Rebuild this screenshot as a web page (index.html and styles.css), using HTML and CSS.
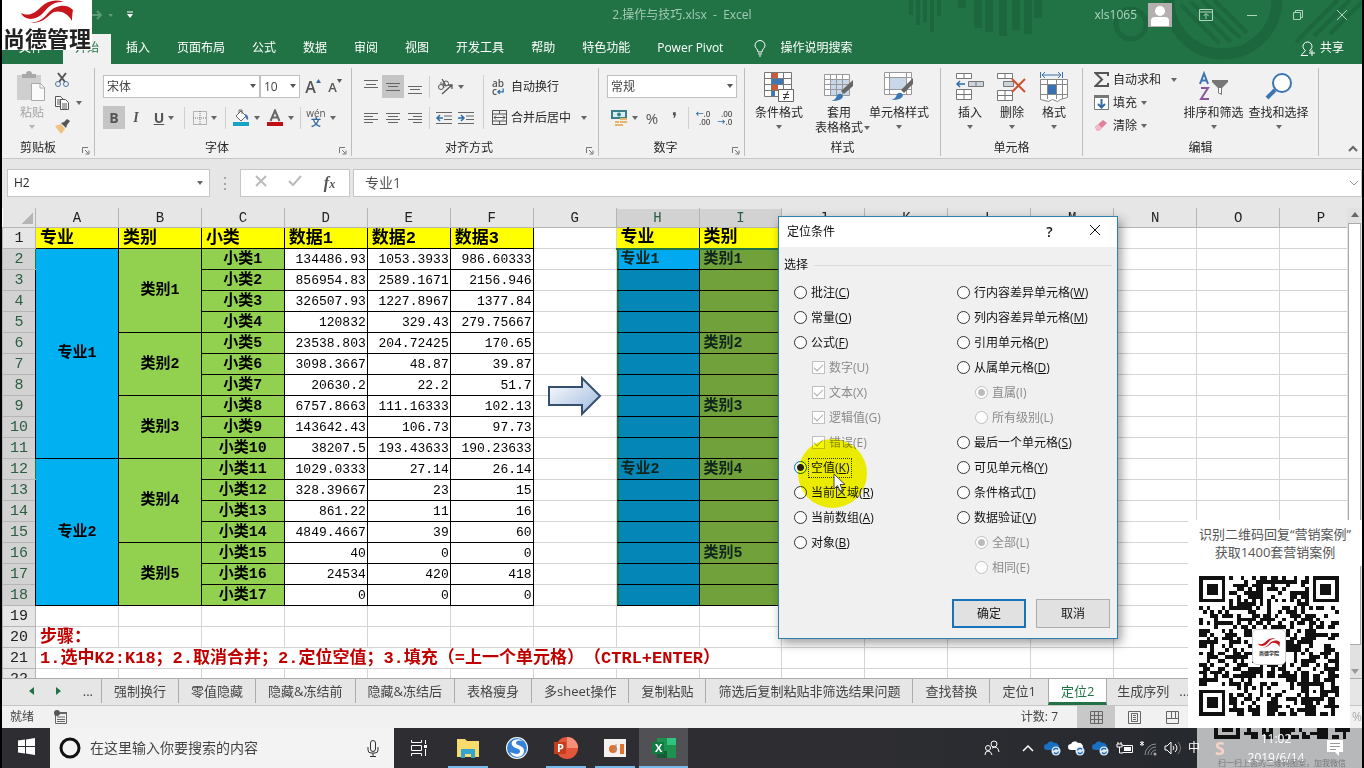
FILE: index.html
```html
<!DOCTYPE html>
<html lang="zh-CN">
<head>
    <meta charset="UTF-8">
    <meta name="viewport" content="width=device-width, initial-scale=1.0">
    <title>2.操作与技巧.xlsx - Excel</title>
    <link rel="stylesheet" href="styles.css">
</head>
<body>
    <svg class="defs" aria-hidden="true">
        <symbol id="cloud" viewBox="0 0 18 16">
            <path d="M3 10a3 3 0 0 1 0-6 4 4 0 0 1 7-1 4 4 0 0 1 5 4v3z" fill="currentColor"/>
            <circle cx="12" cy="11" r="4.500" fill="#dcecf8"/>
            <path d="M9.500 10.500a2.500 2.500 0 0 1 4.500-1M14.500 11.500a2.500 2.500 0 0 1-4.500 1" stroke="#1f66b0" stroke-width="1.300" fill="none"/>
        </symbol>
        <symbol id="swoosh" viewBox="0 0 52 26">
            <path d="M0 13C8 17 14 13 20 7C26 1 34-1 43 2C30 1 26 9 20 15C14 20 4 21 0 13z" fill="#c8161d"/>
            <path d="M4 21C16 25 22 19 28 12C34 5 46 3 52 10C51 15 51 18 51 21C47 13 39 10 33 12C26 15 22 27 4 21z" fill="#c8161d"/>
        </symbol>
        <symbol id="launcher" viewBox="0 0 8 8">
            <path d="M.5 6V.5H6M3 3l3.500 3.500M7 3.500V7H3.500" stroke="#777" fill="none"/>
        </symbol>
    </svg>

    <header class="title-area">
        <svg class="title-art" viewBox="0 0 464 64" aria-hidden="true">
            <g fill="none" stroke="#1c673d">
                <path d="M13 0v15M20 0v25M27 0v22M34 0v32M41 0v16" stroke-width="4"/>
                <path d="M64 0v8M80 0v28M91 0v32M105 0v36M118 0v30M130 0v34M140 0v18" stroke-width="8"/>
                <circle cx="233" cy="24" r="15" stroke-width="5"/>
                <circle cx="325" cy="0" r="54" stroke-width="11"/>
                <path d="M283 5l38 38M293 2l40 40M304 0l38 38M316 0l33 33" stroke-width="4"/>
                <path d="M440 0l-42 42M452 0l-36 36M464 2l-32 32" stroke-width="4"/>
            </g>
        </svg>
        <div class="title-bar">
            <div class="quick">
                <svg width="22" height="14" viewBox="0 0 22 14"><path d="M0 7h9M5 3l4 4-4 4" stroke="#5c9d78" stroke-width="2" fill="none"/><path d="M16 6h5l-2 3z" fill="#5c9d78"/></svg>
                <svg width="8" height="8" viewBox="0 0 8 8"><path d="M1 1h6" stroke="#fff"/><path d="M1 3h6L4 7z" fill="#fff"/></svg>
            </div>
            <h1>2.操作与技巧.xlsx&nbsp; -&nbsp; Excel</h1>
            <div class="window-tools">
                <span>xls1065</span>
                <svg class="avatar" width="24" height="24" viewBox="0 0 24 24"><path d="M0 0h24v24H0z" fill="#b5b0b0"/><circle cx="12" cy="8" r="5" fill="#fff"/><path d="M3 23v-5q0-4 4-4h10q4 0 4 4v5z" fill="#fff"/></svg>
                <button class="win" aria-label="功能区显示选项"><svg width="14" height="12" viewBox="0 0 14 12"><path d="M.5.5h13v11H.5zM.5 3h13M7 10V5M4.500 7L7 4.500 9.500 7"/></svg></button>
                <button class="win" aria-label="最小化"><svg width="12" height="12" viewBox="0 0 12 12"><path d="M1 6.500h10"/></svg></button>
                <button class="win" aria-label="还原"><svg width="12" height="12" viewBox="0 0 12 12"><path d="M1.500 3.500h7v7h-7zM3.500 3.500v-2h7v7h-2"/></svg></button>
                <button class="win" aria-label="关闭"><svg width="12" height="12" viewBox="0 0 12 12"><path d="M1 1l10 10M11 1L1 11"/></svg></button>
            </div>
        </div>
        <nav class="tabs">
            <a href="#" class="tab file">文件</a>
            <a href="#" class="tab active">开始</a>
            <a href="#" class="tab">插入</a>
            <a href="#" class="tab">页面布局</a>
            <a href="#" class="tab">公式</a>
            <a href="#" class="tab">数据</a>
            <a href="#" class="tab">审阅</a>
            <a href="#" class="tab">视图</a>
            <a href="#" class="tab">开发工具</a>
            <a href="#" class="tab">帮助</a>
            <a href="#" class="tab">特色功能</a>
            <a href="#" class="tab">Power Pivot</a>
            <a href="#" class="tab tell">
                <svg width="12" height="17" viewBox="0 0 12 17"><path d="M4 12C4 9 1 8 1 5.500a5 5 0 0 1 10 0C11 8 8 9 8 12zM4 14h4M5 16h2" stroke="#fff" fill="none"/></svg>
                操作说明搜索
            </a>
            <a href="#" class="tab share">
                <svg width="16" height="17" viewBox="0 0 16 17"><path d="M9.500 10.500a4.500 4.500 0 1 0-4 0L1 15.500h7M9.500 10.500l1.500 1M12 10v6M9 13h6" stroke="#fff" fill="none"/></svg>
                共享
            </a>
        </nav>
        <div class="brand">
            <svg width="52" height="26"><use href="#swoosh"/></svg>
            <strong>尚德管理</strong>
        </div>
    </header>

    <section class="ribbon">
        <div class="group clipboard">
            <div class="group-body">
                <button class="big muted">
                    <svg width="30" height="32" viewBox="0 0 30 32"><path d="M0 4h24v25H0z" fill="#d0cfcf"/><path d="M5 3h4a3 3 0 0 1 6 0h4v4H5z" fill="#a8a8a8"/><path d="M14.500 12.500h9l4 4v13h-13z" fill="#fafafa" stroke="#aaa"/><path d="M23 12v5h5" stroke="#aaa" fill="none"/></svg>
                    <span>粘贴</span><i class="caret"></i>
                </button>
                <div class="stack">
                    <button class="tool" aria-label="剪切"><svg width="16" height="16" viewBox="0 0 16 16"><path d="M4 1l7 9M12 1l-7 9" stroke="#555" stroke-width="2"/><circle cx="4" cy="12" r="2.500" fill="none" stroke="#4b77a8"/><circle cx="12" cy="12" r="2.500" fill="none" stroke="#4b77a8"/></svg></button>
                    <button class="tool" aria-label="复制"><svg width="16" height="16" viewBox="0 0 16 16"><path d="M1.500 1.500h5l3 3v7h-8zM3 5h4M3 7h4M3 9h4" fill="#fff" stroke="#555"/><path d="M6.500 4.500h5l3 3v7h-8zM8 9h5M8 11h5M8 13h5" fill="#fff" stroke="#555"/></svg><i class="caret"></i></button>
                    <button class="tool" aria-label="格式刷"><svg width="16" height="16" viewBox="0 0 16 16"><path d="M1 8l6-2 4 5-4 5z" fill="#efc280"/><path d="M7 5l5 5 1-3 3-4-3-2-3 3z" fill="#555"/></svg></button>
                </div>
            </div>
            <div class="group-name">剪贴板<svg><use href="#launcher"/></svg></div>
        </div>

        <div class="group font">
            <div class="group-body rows">
                <div class="line">
                    <span class="drop font-name"><select aria-label="字体"><option>宋体</option></select></span>
                    <span class="drop font-size"><select aria-label="字号"><option>10</option></select></span>
                    <button class="tool grow">A<svg width="5" height="4" viewBox="0 0 5 4"><path d="M0 4h5L2.500 0z" fill="#35699e"/></svg></button>
                    <button class="tool shrink">A<svg width="5" height="4" viewBox="0 0 5 4"><path d="M0 0h5L2.500 4z" fill="#555"/></svg></button>
                </div>
                <div class="line">
                    <button class="tool on bold">B</button>
                    <button class="tool italic">I</button>
                    <button class="tool wide under"><u>U</u><i class="caret"></i></button>
                    <hr>
                    <button class="tool wide" aria-label="边框"><svg width="14" height="14" viewBox="0 0 14 14"><path d="M.5.5h13v13H.5zM7 0v14M0 7h14" fill="none" stroke="#777" stroke-dasharray="1 1"/></svg><i class="caret"></i></button>
                    <hr>
                    <button class="tool wide" aria-label="填充颜色"><svg width="17" height="17" viewBox="0 0 17 17"><path d="M3 7l5-5 5 5-5 5zM6 4V1h3v4" fill="#fff" stroke="#666"/><path d="M12 5q4 1 3 6-3-1-3-6" fill="#3f79b5"/><path d="M0 13h16v4H0z" fill="#17a3c4"/></svg><i class="caret"></i></button>
                    <button class="tool wide" aria-label="字体颜色"><svg width="17" height="17" viewBox="0 0 17 17"><path d="M3.500 12L8 1.500 12.500 12M5 8.500h6" fill="none" stroke="#666" stroke-width="2"/><path d="M0 13h16v4H0z" fill="#c00d18"/></svg><i class="caret"></i></button>
                    <hr>
                    <button class="tool wide" aria-label="拼音"><span class="pinyin">wén<b>文</b></span><i class="caret"></i></button>
                </div>
            </div>
            <div class="group-name">字体<svg><use href="#launcher"/></svg></div>
        </div>

        <div class="group align">
            <div class="group-body">
                <div class="rows">
                    <div class="line">
                        <button class="tool" aria-label="顶端对齐"><svg width="14" height="14" viewBox="0 0 14 14"><path d="M0 .5h14M2 4.500h10M0 7.500h14" stroke="#666"/></svg></button>
                        <button class="tool on" aria-label="垂直居中"><svg width="14" height="14" viewBox="0 0 14 14"><path d="M0 3.500h14M2 6.500h10M0 10.500h14" stroke="#666"/></svg></button>
                        <button class="tool" aria-label="底端对齐"><svg width="14" height="14" viewBox="0 0 14 14"><path d="M0 6.500h14M2 9.500h10M0 13.500h14" stroke="#666"/></svg></button>
                        <hr>
                        <button class="tool wide" aria-label="方向"><svg width="17" height="16" viewBox="0 0 17 16"><g fill="none" stroke="#555"><circle cx="4" cy="8" r="2.500"/><path d="M3 4q3-1 4 5"/><circle cx="9" cy="4.500" r="2.500"/><path d="M5 0l4 7M5 15L15 6M11 6h4v4" stroke-width="1.300"/></g></svg><i class="caret"></i></button>
                    </div>
                    <div class="line">
                        <button class="tool" aria-label="左对齐"><svg width="14" height="12" viewBox="0 0 14 12"><path d="M0 1.500h14M0 4.500h9M0 7.500h14M0 10.500h9" stroke="#666"/></svg></button>
                        <button class="tool" aria-label="居中"><svg width="14" height="12" viewBox="0 0 14 12"><path d="M0 1.500h14M2 4.500h10M0 7.500h14M2 10.500h10" stroke="#666"/></svg></button>
                        <button class="tool" aria-label="右对齐"><svg width="14" height="12" viewBox="0 0 14 12"><path d="M0 1.500h14M5 4.500h9M0 7.500h14M5 10.500h9" stroke="#666"/></svg></button>
                        <hr>
                        <button class="tool" aria-label="减少缩进量"><svg width="16" height="12" viewBox="0 0 16 12"><path d="M0 .5h16M8 4h8M8 7.500h8M0 11.500h16" stroke="#666"/><path d="M1 6h6M4 3L1 6l3 3" stroke="#2f6ca8" stroke-width="1.500" fill="none"/></svg></button>
                        <button class="tool" aria-label="增加缩进量"><svg width="16" height="12" viewBox="0 0 16 12"><path d="M0 .5h16M8 4h8M8 7.500h8M0 11.500h16" stroke="#666"/><path d="M0 6h6M3 3l3 3-3 3" stroke="#2f6ca8" stroke-width="1.500" fill="none"/></svg></button>
                    </div>
                </div>
                <hr class="tall">
                <div class="rows">
                    <button class="text-tool"><span class="abc">ab<br>c<em>↵</em></span>自动换行</button>
                    <button class="text-tool"><svg width="15" height="15" viewBox="0 0 15 15"><path d="M.5.5h14v14H.5zM.5 4h14M.5 11h14M7.500 0v4M7.500 11v4" fill="none" stroke="#555"/><path d="M2 7.500h11M4 5.500l-2 2 2 2M11 5.500l2 2-2 2" stroke="#555" fill="none"/></svg>合并后居中<i class="caret far"></i></button>
                </div>
            </div>
            <div class="group-name">对齐方式<svg><use href="#launcher"/></svg></div>
        </div>

        <div class="group number">
            <div class="group-body rows">
                <div class="line">
                    <span class="drop number-format"><select aria-label="数字格式"><option>常规</option></select></span>
                </div>
                <div class="line">
                    <button class="tool wide" aria-label="会计数字格式"><svg width="17" height="16" viewBox="0 0 17 16"><path d="M0 0h16v9H0z" fill="#3a8088"/><path d="M2 2h12v5H2z" fill="#d7eeee"/><circle cx="8" cy="4.500" r="2" fill="#3a8088"/><path d="M9 8h7v2H9zM9 11h7v2H9zM4 11h4v2H4zM4 14h8v2H4z" fill="#e8b56b"/></svg><i class="caret"></i></button>
                    <button class="tool percent">%</button>
                    <button class="tool comma">❜</button>
                    <hr>
                    <button class="tool decimals"><span><em>←</em>.0<br>.00</span></button>
                    <button class="tool decimals"><span>.00<br><em>→</em>.0</span></button>
                </div>
            </div>
            <div class="group-name">数字<svg><use href="#launcher"/></svg></div>
        </div>

        <div class="group styles">
            <div class="group-body">
                <button class="big">
                    <svg width="30" height="30" viewBox="0 0 30 30"><path d="M.5.5h27v24H.5z" fill="#fff"/><path d="M8 0h6v6H8zM8 12h6v6H8z" fill="#cf5a3a"/><path d="M8 6h11v6H8zM8 18h3v6H8z" fill="#3e77b6"/><path d="M.5.5h27v24H.5zM.5 6.500h27M.5 12.500h27M.5 18.500h27M7.500 0v24M19.500 0v24" fill="none" stroke="#777"/><path d="M14.500 17.500h15v12h-15z" fill="#fff" stroke="#666"/><path d="M19 22.500h6M19 25.500h6M24 19l-4 9" stroke="#333"/></svg>
                    <span>条件格式</span><i class="caret"></i>
                </button>
                <button class="big">
                    <svg width="30" height="30" viewBox="0 0 30 30"><path d="M.5 2.500h25v21H.5z" fill="#fff"/><path d="M7 8h19v15H7z" fill="#c9d8e8"/><path d="M.5 2.500h25v21H.5zM.5 7.500h25M.5 12.500h25M.5 17.500h25M6.500 2v21M12.500 2v21M18.500 2v21" fill="none" stroke="#999"/><path d="M29 8v6l-9 8-3-3z" fill="#666"/><path d="M7 29q5-1 6-6 4-3 6 1 0 5-12 5" fill="#3c77b5"/></svg>
                    <span>套用<br>表格格式</span><i class="caret side"></i>
                </button>
                <button class="big">
                    <svg width="30" height="30" viewBox="0 0 30 30"><path d="M.5.5h27v22H.5z" fill="#fff"/><path d="M6 6h16v11H6z" fill="#c9d8e8"/><path d="M.5.5h27v22H.5zM.5 5.500h27M.5 17.500h27M5.500 0v22M22.500 0v22" fill="none" stroke="#999"/><path d="M29 6v6l-9 9-3-3z" fill="#666"/><path d="M7 28q5-1 6-6 4-3 6 1 0 5-12 5" fill="#3c77b5"/></svg>
                    <span>单元格样式</span><i class="caret"></i>
                </button>
            </div>
            <div class="group-name">样式</div>
        </div>

        <div class="group cells">
            <div class="group-body">
                <button class="big">
                    <svg width="28" height="30" viewBox="0 0 28 30"><path d="M.5 1.500h15v5H.5zM8 1v5M.5 17.500h15v10H.5zM.5 22.500h15M8 17v10" fill="#fff" stroke="#777"/><path d="M12.500 9.500h15v5h-15zM20 9v5" fill="#ccd3da" stroke="#777"/><path d="M1 12h8M4 9l-3 3 3 3" stroke="#2f6ca8" stroke-width="1.500" fill="none"/></svg>
                    <span>插入</span><i class="caret"></i>
                </button>
                <button class="big">
                    <svg width="30" height="30" viewBox="0 0 30 30"><path d="M.5 1.500h15v5H.5zM8 1v5M.5 18.500h15v10H.5zM.5 23.500h15M8 18v10" fill="#fff" stroke="#777"/><path d="M6.500 9.500h10v5h-10z" fill="#ccd3da" stroke="#777"/><path d="M15 7l13 13M28 7L15 20" stroke="#d2512d" stroke-width="2"/></svg>
                    <span>删除</span><i class="caret"></i>
                </button>
                <button class="big">
                    <svg width="28" height="32" viewBox="0 0 28 32"><path d="M.5 8.500h27v20h-6l-3 2h-9l-3-2h-6z" fill="#fff"/><path d="M.5 8.500h27v18l-7 2-3 2-5-2-4 2-8-2zM.5 13.500h27M.5 23.500h27M7.500 8v20M16.500 8v20M22.500 8v20" fill="none" stroke="#888"/><path d="M8 14h8v9H8z" fill="#3970b0"/><path d="M.5 1v6M22.500 1v6M2 4h19M5 1L2 4l3 3M18 1l3 3-3 3" fill="none" stroke="#3970b0"/></svg>
                    <span>格式</span><i class="caret"></i>
                </button>
            </div>
            <div class="group-name">单元格</div>
        </div>

        <div class="group edit">
            <div class="group-body">
                <div class="stack">
                    <button class="text-tool"><svg width="15" height="15" viewBox="0 0 15 15"><path d="M14 4V1H1.500L8 7.500 1.500 14H14v-3" stroke="#555" stroke-width="2" fill="none"/></svg>自动求和<i class="caret far"></i></button>
                    <button class="text-tool"><svg width="15" height="15" viewBox="0 0 15 15"><path d="M.5.500h14v14H.5z" fill="#fff" stroke="#777"/><path d="M0 0h15v3H0z" fill="#777"/><path d="M7.500 4v8M4 9l3.500 3.500L11 9" stroke="#2f6ca8" stroke-width="2" fill="none"/></svg>填充<i class="caret"></i></button>
                    <button class="text-tool"><svg width="15" height="15" viewBox="0 0 15 15"><path d="M1 9l8-7 4 3-8 8H3z" fill="#e0809a"/><path d="M1 9l3-3 4 4-3 3H3z" fill="#f2b9c8"/></svg>清除<i class="caret"></i></button>
                </div>
                <button class="big">
                    <svg width="30" height="30" viewBox="0 0 30 30"><path d="M1 12L5 1.500 9 12M2.500 8.500h5" stroke="#3b75b5" stroke-width="2" fill="none"/><path d="M2 16h7L2 27h8" stroke="#8b56a0" stroke-width="2" fill="none"/><path d="M13 8h16v2l-6 6v7l-4-2v-5l-6-6z" fill="#777"/><path d="M21 16v5" stroke="#fff" stroke-width="2"/></svg>
                    <span>排序和筛选</span><i class="caret"></i>
                </button>
                <button class="big">
                    <svg width="30" height="30" viewBox="0 0 30 30"><circle cx="18" cy="11" r="9" fill="#fff" stroke="#3b75b5" stroke-width="2"/><path d="M11 18l-8 8" stroke="#3b75b5" stroke-width="4"/></svg>
                    <span>查找和选择</span><i class="caret"></i>
                </button>
            </div>
            <div class="group-name">编辑</div>
        </div>
        <button class="collapse" aria-label="折叠功能区"><svg width="10" height="7" viewBox="0 0 10 7"><path d="M1 6l4-4 4 4" stroke="#666" stroke-width="2" fill="none"/></svg></button>
    </section>

    <section class="formula-bar">
        <div class="name-box"><input type="text" value="H2" aria-label="名称框"><i class="caret"></i></div>
        <span class="dots">⋮</span>
        <div class="fx-box">
            <button aria-label="取消"><svg width="12" height="12" viewBox="0 0 12 12"><path d="M1 1l10 10M11 1L1 11" stroke="#bbb" stroke-width="2"/></svg></button>
            <button aria-label="输入"><svg width="14" height="12" viewBox="0 0 14 12"><path d="M1 6l4 4 8-9" stroke="#bbb" stroke-width="2" fill="none"/></svg></button>
            <button class="fx">f<small>x</small></button>
        </div>
        <div class="formula"><input type="text" value="专业1" aria-label="编辑栏"><svg width="8" height="5" viewBox="0 0 8 5"><path d="M0 0l4 4 4-4" stroke="#999" fill="none"/></svg></div>
    </section>

    <main class="sheet">
        <div class="grid">
            <table>
                <colgroup id="cols"><col class="row-col"></colgroup>
                <thead><tr id="letters"><th class="corner"></th></tr></thead>
                <tbody id="cells"></tbody>
            </table>
            <svg class="arrow" width="54" height="40" viewBox="0 0 54 40">
                <defs><linearGradient id="arrow-fill" x2="1" y2="1"><stop offset="0" stop-color="#fff"/><stop offset="1" stop-color="#9db9df"/></linearGradient></defs>
                <path d="M1 11h33V2l18 18-18 18v-9H1z" fill="url(#arrow-fill)" stroke="#35506f" stroke-width="2"/>
            </svg>
        </div>
        <div class="scrollbar"><i class="up"></i><b></b><i class="down"></i></div>
    </main>

    <nav class="sheet-tabs">
        <span class="arrows"><i class="prev"></i><i class="next"></i><span>...</span></span>
        <a href="#">强制换行</a>
        <a href="#">零值隐藏</a>
        <a href="#">隐藏&amp;冻结前</a>
        <a href="#">隐藏&amp;冻结后</a>
        <a href="#">表格瘦身</a>
        <a href="#">多sheet操作</a>
        <a href="#">复制粘贴</a>
        <a href="#">筛选后复制粘贴非筛选结果问题</a>
        <a href="#">查找替换</a>
        <a href="#">定位1</a>
        <a href="#" class="current">定位2</a>
        <a href="#">生成序列</a>
        <span>...</span>
    </nav>

    <footer class="status">
        <span>就绪</span>
        <svg width="13" height="14" viewBox="0 0 13 14"><path d="M1.500 5v8.500h11v-10H6M3 7h8M3 9.500h8M3 11.500h8" stroke="#666" fill="none"/><circle cx="3" cy="3" r="3" fill="#555"/><path d="M6 2h7v2H6z" fill="#666"/></svg>
        <span class="count">计数: 7</span>
        <button class="view on" aria-label="普通"><svg width="13" height="13" viewBox="0 0 13 13"><path d="M.5.5h12v12H.5zM.5 4.500h12M.5 8.500h12M4.500 0v13M8.500 0v13"/></svg></button>
        <button class="view" aria-label="页面布局"><svg width="13" height="13" viewBox="0 0 13 13"><path d="M.5.5h12v12H.5zM3.500 2.500h6v8h-6zM5 4.500h3M5 6.500h3M5 8.500h3"/></svg></button>
        <button class="view" aria-label="分页预览"><svg width="13" height="13" viewBox="0 0 13 13"><path d="M.5.5h12v12H.5zM5.500 0v7M9.500 0v7M.5 7.500h12"/></svg></button>
        <span class="zoom-level">%</span>
    </footer>

    <section class="taskbar">
        <button class="start" aria-label="开始"><svg width="17" height="17" viewBox="0 0 17 17"><path d="M0 2.500l7-1V8H0zM8 1.500L17 0v8H8zM0 9h7v6.500l-7-1zM8 9h9v8l-9-1.500z" fill="#fff"/></svg></button>
        <div class="search">
            <svg width="22" height="22" viewBox="0 0 22 22"><circle cx="11" cy="11" r="9" stroke="#111" stroke-width="3" fill="none"/></svg>
            <input type="text" placeholder="在这里输入你要搜索的内容" aria-label="搜索">
            <svg width="12" height="17" viewBox="0 0 12 17"><path d="M3.500 3a2.500 2.500 0 0 1 5 0v6a2.500 2.500 0 0 1-5 0zM1 7v3q0 3 3 3h4q3 0 3-3V7M6 13v3M3 16.500h6" stroke="#333" fill="none"/></svg>
        </div>
        <button class="app" aria-label="任务视图"><svg width="18" height="16" viewBox="0 0 18 16"><path d="M1.500 0v2.500h10V0M1.500 16v-2.500h10V16M1.500 5.500h10v5h-10zM15.500 0v4M15.500 9v7" stroke="#fff" fill="none"/><path d="M14 5h3v3h-3z" fill="#fff"/></svg></button>
        <button class="app open" aria-label="文件资源管理器"><svg width="22" height="20" viewBox="0 0 22 20"><path d="M0 1h8l2 2h12v16H0z" fill="#f8dc6b"/><path d="M4 11h14v9h-4v-4H8v4H4z" fill="#35a3cf"/></svg></button>
        <button class="app" aria-label="浏览器"><svg width="24" height="24" viewBox="0 0 24 24"><circle cx="12" cy="12" r="11" fill="#fff"/><circle cx="12" cy="12" r="10" fill="#3583d6"/><path d="M18 5C12 1 5 5 7 9c2 4 9 3 8 7-1 3-6 2-10 0 3 7 13 6 14 0 1-7-8-6-8-9 0-3 4-3 7-2" fill="#fff"/></svg></button>
        <button class="app open" aria-label="PowerPoint"><svg width="26" height="24" viewBox="0 0 26 24"><circle cx="14" cy="12" r="11" fill="#e2563a"/><path d="M14 1a11 11 0 0 1 11 11H14z" fill="#f69179"/><path d="M1 6h12v12H1z" fill="#c43e1c"/></svg><b>P</b></button>
        <button class="app open" aria-label="录屏"><svg width="22" height="20" viewBox="0 0 22 20"><path d="M0 1h22v18H0z" fill="#f5f1ef"/><circle cx="9" cy="11" r="4" fill="#df7131"/><path d="M12 6v6H9" stroke="#999" fill="none"/><path d="M16 6h4v10h-4z" fill="#df7131"/></svg></button>
        <button class="app open running" aria-label="Excel"><svg width="26" height="24" viewBox="0 0 26 24"><path d="M6 2h19v20H6z" fill="#1e9150"/><path d="M16 2h9v7h-9z" fill="#30c481"/><path d="M6 15h10v7H6z" fill="#155c37"/><path d="M1 6h12v12H1z" fill="#107c41"/></svg><b>X</b></button>
        <div class="tray">
            <svg class="people" width="16" height="16" viewBox="0 0 16 16"><circle cx="10" cy="4" r="3" stroke="#fff" fill="none"/><path d="M8 8q6-3 7 4" stroke="#fff" fill="none"/><circle cx="4" cy="8" r="2.500" stroke="#fff" fill="none"/><path d="M1 15q0-4 3-4t4 4" stroke="#fff" fill="none"/></svg>
            <svg width="12" height="8" viewBox="0 0 12 8"><path d="M1 7l5-5 5 5" stroke="#fff" fill="none" stroke-width="1.500"/></svg>
            <svg class="blue" width="18" height="16"><use href="#cloud"/></svg>
            <svg width="18" height="16"><use href="#cloud"/></svg>
            <svg class="blue" width="18" height="16"><use href="#cloud"/></svg>
            <svg width="18" height="14" viewBox="0 0 18 14"><path d="M6.500 4.500h10v7h-10" fill="none" stroke="#fff"/><path d="M8 6h7v4H8z" fill="#fff"/><path d="M1 3h5v3H1zM2 1v2M5 1v2M3.500 6v6H7" stroke="#fff" fill="none"/></svg>
            <svg width="18" height="16" viewBox="0 0 18 16"><path d="M2 1v5M0 2l4 3M4 2L0 5" stroke="#fff"/><g fill="none" stroke="#899095"><path d="M5 15A11 11 0 0 1 16 4M8 15A8 8 0 0 1 16 7M11 15a5 5 0 0 1 5-5"/></g><circle cx="15" cy="14" r="1.500" fill="#aaa"/></svg>
            <svg width="18" height="14" viewBox="0 0 18 14"><path d="M1 5h2l4-4v12L3 9H1z" stroke="#fff" fill="none"/><path d="M9 5q2 2 0 4M11 3q4 4 0 8" stroke="#fff" fill="none"/><path d="M14 1q5 6 0 12" stroke="#777" fill="none"/></svg>
            <span class="ime">中</span>
        </div>
    </section>

    <form class="dialog">
        <header>
            <h2>定位条件</h2>
            <button type="button" class="help">?</button>
            <button type="button" aria-label="关闭"><svg width="12" height="12" viewBox="0 0 12 12"><path d="M1 1l10 10M11 1L1 11" stroke="#111"/></svg></button>
        </header>
        <fieldset>
            <legend>选择</legend>
            <div class="options">
                <div>
                    <label><input type="radio" name="go"><span>批注(<u>C</u>)</span></label>
                    <label><input type="radio" name="go"><span>常量(<u>O</u>)</span></label>
                    <label><input type="radio" name="go"><span>公式(<u>F</u>)</span></label>
                    <label class="sub"><input type="checkbox" checked disabled><span>数字(U)</span></label>
                    <label class="sub"><input type="checkbox" checked disabled><span>文本(X)</span></label>
                    <label class="sub"><input type="checkbox" checked disabled><span>逻辑值(G)</span></label>
                    <label class="sub"><input type="checkbox" checked disabled><span>错误(E)</span></label>
                    <label class="focused"><input type="radio" name="go" checked><span>空值(<u>K</u>)</span></label>
                    <label><input type="radio" name="go"><span>当前区域(<u>R</u>)</span></label>
                    <label><input type="radio" name="go"><span>当前数组(<u>A</u>)</span></label>
                    <label><input type="radio" name="go"><span>对象(<u>B</u>)</span></label>
                </div>
                <div>
                    <label><input type="radio" name="go"><span>行内容差异单元格(<u>W</u>)</span></label>
                    <label><input type="radio" name="go"><span>列内容差异单元格(<u>M</u>)</span></label>
                    <label><input type="radio" name="go"><span>引用单元格(<u>P</u>)</span></label>
                    <label><input type="radio" name="go"><span>从属单元格(<u>D</u>)</span></label>
                    <label class="sub"><input type="radio" name="level" checked disabled><span>直属(I)</span></label>
                    <label class="sub"><input type="radio" name="level" disabled><span>所有级别(L)</span></label>
                    <label><input type="radio" name="go"><span>最后一个单元格(<u>S</u>)</span></label>
                    <label><input type="radio" name="go"><span>可见单元格(<u>Y</u>)</span></label>
                    <label><input type="radio" name="go"><span>条件格式(<u>T</u>)</span></label>
                    <label><input type="radio" name="go"><span>数据验证(<u>V</u>)</span></label>
                    <label class="sub"><input type="radio" name="valid" checked disabled><span>全部(L)</span></label>
                    <label class="sub"><input type="radio" name="valid" disabled><span>相同(E)</span></label>
                </div>
            </div>
        </fieldset>
        <div class="actions">
            <button type="button" class="ok">确定</button>
            <button type="button">取消</button>
        </div>
    </form>
    <div class="halo"></div>
    <svg class="cursor" width="14" height="20" viewBox="0 0 14 20"><path d="M1 1v15l3.500-3.500L7 18l2.500-1L7 11.500h5z" fill="#fff" stroke="#444"/></svg>

    <aside class="promo">
        <p>识别二维码回复“营销案例”<br>获取1400套营销案例</p>
        <div class="code">
            <svg id="qr" width="140" height="140" viewBox="0 0 37 37" shape-rendering="crispEdges"></svg>
            <div class="code-logo"><svg width="22" height="11" viewBox="0 0 52 26"><use href="#swoosh"/></svg><b>尚德学院</b></div>
        </div>
        <div class="ghost">
            <svg id="qr-ghost" width="138" height="11" viewBox="0 34 37 3" shape-rendering="crispEdges"></svg>
            <div class="clock-row">
                <b class="sogou">S</b>
                <time>11:02<br>2019/6/14</time>
                <svg width="17" height="16" viewBox="0 0 17 16"><path d="M0 0h16v12h-4v4l-4-4H0z" fill="#fff"/><path d="M3 3.500h10M3 6.500h10M3 9.500h6" stroke="#999"/></svg>
            </div>
            <small>扫一扫上面的二维码图案，加我微信</small>
        </div>
    </aside>
    <script src="script.js"></script>
</body>
</html>
```
FILE: styles.css
```css
* {
    box-sizing: border-box;
}
body {
    margin: 0;
    height: 100vh;
    display: flex;
    flex-direction: column;
    position: relative;
    overflow: hidden;
    border: 0 solid #000;
    border-width: 0 2px;
    background: #e6e6e6;
    font: 12px/16px "Open Sans", "Noto Sans CJK SC", sans-serif;
    color: #262626;
}
button, input, select {
    font: inherit;
    color: inherit;
    background: none;
    border: none;
    padding: 0;
    margin: 0;
}
a {
    color: inherit;
    text-decoration: none;
}
hr {
    width: 1px;
    height: 22px;
    margin: 0 3px;
    border: none;
    background: #d0d0d0;
}
.defs {
    position: absolute;
    width: 0;
    height: 0;
}
.caret {
    flex: none;
    border: 3px solid transparent;
    border-top: 4px solid #666;
    border-bottom: none;
}

/* title bar and ribbon tabs */
.title-area {
    position: relative;
    flex: none;
    background: #217346;
    color: #fff;
}
.title-art {
    position: absolute;
    right: 0;
    top: 0;
    width: 464px;
    height: 64px;
}
.title-bar {
    position: relative;
    display: grid;
    grid-template-columns: 1fr auto 1fr;
    align-items: center;
    height: 34px;
    padding-bottom: 4px;
}
.title-bar h1 {
    margin: 0;
    font-size: 12px;
    font-weight: normal;
    color: #a3cbb4;
}
.quick {
    display: flex;
    align-items: center;
    gap: 12px;
    padding-left: 90px;
}
.window-tools {
    display: flex;
    align-items: center;
    justify-content: flex-end;
    color: #b0d5bf;
}
.avatar {
    margin: 0 11px;
}
.win {
    width: 46px;
    height: 24px;
    display: grid;
    place-items: center;
}
.win:last-child {
    width: 41px;
}
.win path {
    fill: none;
    stroke: #b0d5bf;
}
.tabs {
    position: relative;
    display: flex;
    gap: 3px;
    height: 30px;
}
.tab {
    display: flex;
    align-items: center;
    padding: 0 12px 2px;
}
.tab.file {
    width: 58px;
    padding-left: 17px;
}
.tab.active {
    background: #f1f1f1;
    color: #217346;
}
.tab.tell {
    gap: 14px;
    padding-left: 16px;
}
.tab.share {
    gap: 4px;
    margin-left: auto;
    padding-right: 18px;
}
.brand {
    position: absolute;
    left: 0;
    top: 0;
    width: 90px;
    height: 50px;
    display: flex;
    flex-direction: column;
    align-items: center;
    background: #fff;
    color: #222;
}
.brand strong {
    font-size: 22px;
    line-height: 24px;
    white-space: nowrap;
}

/* ribbon */
.ribbon {
    flex: none;
    display: flex;
    height: 95px;
    padding: 4px 0 2px;
    background: #f1f1f1;
    border-bottom: 1px solid #c8c8c8;
}
.group {
    display: flex;
    flex-direction: column;
    flex: none;
    border-right: 1px solid #bdbdbd;
}
.group-body {
    display: flex;
    flex: 1;
}
.group-name {
    position: relative;
    line-height: 16px;
    text-align: center;
}
.group-name svg {
    position: absolute;
    right: 4px;
    bottom: 1px;
    width: 8px;
    height: 8px;
}
.clipboard .group-name, .font .group-name, .align .group-name, .number .group-name {
    padding-right: 20px;
}
.clipboard {
    width: 93px;
}
.font {
    width: 257px;
    padding-left: 8px;
}
.align {
    width: 247px;
    padding-left: 8px;
}
.number {
    width: 146px;
    padding-left: 8px;
}
.styles {
    width: 196px;
}
.cells {
    width: 142px;
}
.edit {
    width: 236px;
}
.rows {
    display: flex;
    flex-direction: column;
    gap: 8px;
    padding-top: 7px;
}
.line {
    display: flex;
    align-items: center;
    height: 23px;
}
.tool {
    width: 22px;
    height: 23px;
    display: flex;
    align-items: center;
    justify-content: center;
    gap: 6px;
    color: #555;
}
.tool.wide {
    width: 34px;
    gap: 4px;
}
.tool.on {
    background: #c5c5c5;
}
.bold, .italic, .under {
    font-size: 14px;
    font-weight: bold;
}
.italic {
    font-family: "Liberation Serif", serif;
    font-style: italic;
}
.grow, .shrink {
    gap: 0;
    font-size: 16px;
    font-weight: 600;
}
.shrink {
    font-size: 13px;
}
.grow svg, .shrink svg {
    align-self: flex-start;
    margin-top: 4px;
}
.pinyin {
    font-size: 10px;
    line-height: 9px;
    text-align: center;
}
.pinyin b {
    display: block;
    color: #35699e;
}
.percent {
    font-size: 15px;
}
.comma {
    font-size: 16px;
}
.decimals {
    font-size: 8px;
    line-height: 8px;
    font-weight: 600;
    text-align: right;
}
.decimals em, .abc em {
    color: #2f6ca8;
    font-style: normal;
}
.drop {
    position: relative;
    height: 23px;
}
.drop::after {
    content: "";
    position: absolute;
    right: 4px;
    top: 9px;
    border: 3px solid transparent;
    border-top: 4px solid #555;
    border-bottom: none;
}
.drop select {
    appearance: none;
    width: 100%;
    height: 23px;
    padding-left: 3px;
    background: #fff;
    border: 1px solid #c0c0c0;
    color: #444;
}
.font-name {
    width: 157px;
}
.font-size {
    width: 40px;
    margin-right: 2px;
}
.number-format {
    width: 130px;
}
.tall {
    height: 54px;
    margin: 7px 8px 0 6px;
}
.text-tool {
    display: flex;
    align-items: center;
    gap: 4px;
    height: 23px;
    white-space: nowrap;
}
.caret.far {
    margin-left: 6px;
}
.abc {
    width: 15px;
    font-size: 10px;
    line-height: 8px;
    text-align: left;
    color: #555;
    font-weight: 600;
}
.stack {
    display: flex;
    flex-direction: column;
    align-items: flex-start;
}
.clipboard .big {
    margin: 0 4px 0 12px;
    width: 36px;
}
.clipboard .stack .tool {
    width: auto;
}
.edit .stack {
    width: 98px;
    padding: 0 0 0 11px;
}
.big {
    display: flex;
    flex-direction: column;
    align-items: center;
    padding-top: 3px;
    text-align: center;
    line-height: 15px;
    white-space: nowrap;
}
.big svg {
    flex: none;
    margin-bottom: 2px;
    height: 32px;
}
.big .caret {
    margin-top: 5px;
}
.big .caret.side {
    margin: -9px 0 0 56px;
}
.muted {
    color: #a5a5a5;
}
.muted .caret {
    border-top-color: #b5b5b5;
}
.styles .big {
    width: 60px;
}
.styles .group-body {
    padding: 0 4px;
}
.cells .big {
    width: 42px;
}
.cells .group-body {
    padding-left: 8px;
}
.edit .big {
    width: 65px;
}
.collapse {
    margin-left: auto;
    align-self: flex-end;
    padding-right: 4px;
}

/* formula bar */
.formula-bar {
    flex: none;
    display: flex;
    align-items: center;
    height: 49px;
    padding: 0 0 1px 5px;
}
.name-box, .fx-box, .formula {
    display: flex;
    align-items: center;
    height: 28px;
    background: #fff;
    border: 1px solid #c6c6c6;
}
.name-box {
    width: 203px;
    padding: 0 6px;
}
.name-box input {
    flex: 1;
    min-width: 0;
}
.dots {
    width: 30px;
    text-align: center;
    font-size: 16px;
    color: #999;
}
.fx-box {
    width: 110px;
    justify-content: space-around;
    padding: 0 3px;
}
.fx {
    font: italic bold 16px "Liberation Serif", serif;
    color: #555;
}
.fx small {
    font-size: 12px;
}
.formula {
    flex: 1;
    margin-left: 3px;
    padding: 0 3px 0 11px;
}
.formula input {
    flex: 1;
    font-size: 14px;
    color: #555;
}

/* worksheet */
.sheet {
    flex: 1;
    min-height: 0;
    display: flex;
}
.grid {
    position: relative;
    flex: 1;
    min-width: 0;
    overflow: hidden;
    background: #fff;
}
table {
    width: 1361px;
    table-layout: fixed;
    border-collapse: collapse;
    font: 13px/19px "Liberation Mono", "Noto Sans CJK SC", monospace;
    color: #000;
}
.row-col {
    width: 33px;
}
th, td {
    height: 21px;
    padding: 0 1px;
    border: 1px solid #d4d4d4;
    white-space: nowrap;
}
th {
    background: #e6e6e6;
    border-color: #b5b5b5;
    font-size: 15px;
    font-weight: normal;
    color: #222;
}
thead th {
    height: 19px;
    line-height: 17px;
    border-top-color: #e6e6e6;
    font-size: 14px;
}
.corner {
    border-left: none;
    background: linear-gradient(135deg, transparent 50%, #b5b5b5 50%) no-repeat 18px 3px / 12px 12px, #e6e6e6;
}
th.picked {
    background: #d2d2d2;
    color: #2c5c42;
}
tbody th.picked {
    border-right: 1px solid #217346;
}
.title {
    background: #ff0;
    font-size: 17px;
    font-weight: bold;
    text-align: left;
    padding-left: 4px;
    border-color: #000;
}
.major, .minor, .name {
    font-size: 15px;
    font-weight: bold;
    text-align: center;
    border-color: #000;
}
.major {
    background: #00b0f0;
}
.minor, .name {
    background: #92d050;
}
.num {
    text-align: right;
    border-color: #000;
}
.sel-h, .sel-i {
    padding-left: 4px;
    font-size: 15px;
    font-weight: bold;
    border-color: #000;
    color: #10251b;
}
.sel-h {
    background: #0487b7;
    box-shadow: inset 2px 0 #217346;
}
.sel-h.first {
    background: #00a9f0;
}
.sel-i {
    background: #70a13b;
}
.first {
    border-top: 2px solid #217346;
}
.note {
    font-size: 17px;
    font-weight: bold;
    color: #c00000;
    padding-left: 4px;
    text-spacing-trim: space-all;
}
.arrow {
    position: absolute;
    left: 546px;
    top: 168px;
}
.scrollbar {
    width: 15px;
    display: flex;
    flex-direction: column;
    align-items: center;
    padding: 4px 0;
    background: #e1e1e1;
}
.scrollbar b {
    flex: 1;
    width: 13px;
    margin: 6px 0 24px;
    background: #fff;
    border: 1px solid #ababab;
}
.up, .down {
    border: 4px solid transparent;
    border-top: none;
    border-bottom: 5px solid #666;
}
.down {
    border-top: 5px solid #999;
    border-bottom: none;
}

/* sheet tabs and status */
.sheet-tabs {
    flex: none;
    display: flex;
    align-items: flex-start;
    height: 28px;
    border-top: 1px solid #ababab;
    border-bottom: 1px solid #c6c6c6;
    color: #444;
    font-size: 13px;
    line-height: 24px;
    white-space: nowrap;
}
.sheet-tabs a {
    padding: 0 12px;
    border-left: 1px solid #ababab;
}
.sheet-tabs .current {
    align-self: stretch;
    background: #fff;
    border-right: 1px solid #ababab;
    border-bottom: 3px solid #217346;
    color: #217346;
}
.sheet-tabs .current + a {
    padding: 0 10px;
    border: none;
}
.arrows {
    width: 99px;
    display: flex;
    align-items: center;
    justify-content: space-between;
    padding: 0 8px 0 27px;
}
.prev, .next {
    border: 4px solid transparent;
    border-right: 5px solid #217346;
    border-left: none;
}
.next {
    border-left: 5px solid #217346;
    border-right: none;
}
.status {
    flex: none;
    display: flex;
    align-items: center;
    height: 22px;
    padding-left: 8px;
    background: #f1f1f1;
    color: #444;
}
.status > svg {
    margin-left: 20px;
}
.count {
    margin-left: auto;
    padding-right: 19px;
}
.view {
    width: 38px;
    height: 22px;
    display: grid;
    place-items: center;
}
.view.on {
    background: #c8c8c8;
}
.view path {
    fill: none;
    stroke: #666;
}
.zoom-level {
    width: 171px;
    text-align: right;
    color: #aaa;
}

/* windows taskbar */
.taskbar {
    flex: none;
    display: flex;
    height: 40px;
    background: linear-gradient(90deg, #2e2e32 60%, #23272d);
    color: #fff;
}
.start {
    width: 48px;
}
.search {
    width: 344px;
    display: flex;
    align-items: center;
    gap: 9px;
    padding: 0 15px 0 9px;
    background: #f3f3f3;
}
.search input {
    flex: 1;
    font-size: 14px;
}
.search input::placeholder {
    color: #444;
    opacity: 1;
}
.app {
    position: relative;
    width: 49px;
    display: grid;
    place-items: center;
}
.app b {
    position: absolute;
    left: 16px;
    top: 12px;
    font-size: 11px;
}
.app.open {
    background: linear-gradient(#76b9ed, #76b9ed) no-repeat center bottom / 40px 2px;
}
.app.open.running {
    background: #515155;
    box-shadow: inset 0 -2px #76b9ed;
}
.tray {
    display: flex;
    align-items: center;
    gap: 6px;
    margin-left: auto;
    padding-right: 162px;
}
.people {
    margin-right: 16px;
}
.tray .people + svg {
    margin-right: 4px;
}
.blue {
    color: #1b6fc2;
}
.ime {
    position: relative;
    z-index: 2;
}

/* go-to-special dialog */
.dialog {
    position: absolute;
    left: 776px;
    top: 216px;
    width: 340px;
    background: #f0f0f0;
    border: 1px solid #2f80ad;
    box-shadow: 3px 4px 10px rgba(0, 0, 0, 0.4);
    color: #111;
}
.dialog header {
    display: flex;
    align-items: center;
    height: 30px;
    padding-left: 8px;
    background: #fff;
}
.dialog h2 {
    flex: 1;
    margin: 0;
    font-size: 12px;
    font-weight: normal;
}
.dialog header button {
    width: 45px;
}
.help {
    font-size: 14px;
    font-weight: 600;
}
.dialog fieldset {
    margin: 0;
    padding: 0 5px;
    border: none;
}
.dialog legend {
    display: flex;
    align-items: center;
    gap: 6px;
    width: 100%;
    padding: 10px 0 7px;
}
.dialog legend::after {
    content: "";
    flex: 1;
    border-top: 1px solid #dcdcdc;
}
.options {
    display: grid;
    grid-template-columns: 163px 1fr;
    padding-left: 10px;
}
.options label {
    display: flex;
    align-items: center;
    height: 25px;
    gap: 1px;
}
.options label span {
    padding: 1px 2px;
    border: 1px dotted transparent;
}
.options .sub {
    padding-left: 18px;
    color: #8a8a8a;
}
.options .focused span {
    border-color: #333;
}
.options input {
    appearance: none;
    flex: none;
    width: 13px;
    height: 13px;
    background: #fff;
    border: 1px solid #333;
}
.options input[type="radio"] {
    border-radius: 50%;
}
.options input[type="radio"]:checked {
    background: radial-gradient(circle, #222 3px, #fff 4px);
}
.options input:disabled {
    border-color: #c0c0c0;
}
.options input[type="radio"]:checked:disabled {
    background: radial-gradient(circle, #bbb 3px, #fff 4px);
}
.options input[type="checkbox"] {
    display: grid;
    place-items: center;
}
.options input[type="checkbox"]:checked::before {
    content: "";
    width: 4px;
    height: 8px;
    margin-bottom: 2px;
    border: solid #aaa;
    border-width: 0 1px 1px 0;
    transform: rotate(45deg);
}
.options .focused input {
    border-color: #0067b8;
}
.actions {
    display: flex;
    justify-content: flex-end;
    gap: 10px;
    padding: 19px 7px 10px 0;
}
.actions button {
    width: 74px;
    height: 29px;
    background: #e1e1e1;
    border: 1px solid #adadad;
}
.actions .ok {
    border: 2px solid #1a73b8;
}
.halo {
    position: absolute;
    left: 796px;
    top: 439px;
    width: 69px;
    height: 69px;
    border-radius: 50%;
    background: #fafa00;
    mix-blend-mode: multiply;
}
.cursor {
    position: absolute;
    left: 831px;
    top: 473px;
}

/* qr code panel over the corner */
.promo {
    position: absolute;
    right: 0;
    bottom: 0;
    width: 174px;
}
.promo p {
    margin: 0;
    padding: 5px 0;
    background: #fff;
    font-size: 13px;
    line-height: 18px;
    text-align: center;
    white-space: nowrap;
    color: #555;
}
.code {
    position: relative;
    width: 162px;
    padding: 10px 11px 12px;
    background: #fff;
}
.code > svg {
    display: block;
}
.code-logo {
    position: absolute;
    left: 64px;
    top: 63px;
    width: 34px;
    height: 36px;
    display: flex;
    flex-direction: column;
    align-items: center;
    justify-content: center;
    background: #fff;
    border: 1px solid #ccc;
    border-radius: 5px;
}
.code-logo b {
    font-size: 5px;
    line-height: 8px;
}
.ghost {
    position: relative;
    height: 40px;
    margin-left: 9px;
    background: #b7b8ba;
    color: #fff;
}
.ghost > svg {
    position: absolute;
    left: 16px;
    top: 0;
}
.clock-row {
    position: relative;
    display: flex;
    align-items: center;
    height: 40px;
    padding: 0 18px;
}
.clock-row time {
    flex: 1;
    text-align: center;
    line-height: 19px;
}
.sogou {
    color: #f7d3c6;
    font-size: 18px;
}
.ghost small {
    position: absolute;
    left: 21px;
    bottom: 0;
    font-size: 8px;
    line-height: 10px;
    white-space: nowrap;
    color: #777;
}
```
FILE: script.js
```js
const letters = "ABCDEFGHIJKLMNOP".split("");
const titles = ["专业", "类别", "小类", "数据1", "数据2", "数据3", "", "专业", "类别"];
const numbers = [
    ["134486.93", "1053.3933", "986.60333"],
    ["856954.83", "2589.1671", "2156.946"],
    ["326507.93", "1227.8967", "1377.84"],
    ["120832", "329.43", "279.75667"],
    ["23538.803", "204.72425", "170.65"],
    ["3098.3667", "48.87", "39.87"],
    ["20630.2", "22.2", "51.7"],
    ["6757.8663", "111.16333", "102.13"],
    ["143642.43", "106.73", "97.73"],
    ["38207.5", "193.43633", "190.23633"],
    ["1029.0333", "27.14", "26.14"],
    ["328.39667", "23", "15"],
    ["861.22", "11", "16"],
    ["4849.4667", "39", "60"],
    ["40", "0", "0"],
    ["24534", "420", "418"],
    ["0", "0", "0"]
];
// first row of each merged block: [label, rows]
const majors = { 2: ["专业1", 10], 12: ["专业2", 7] };
const minors = { 2: ["类别1", 4], 6: ["类别2", 3], 9: ["类别3", 3], 12: ["类别4", 4], 16: ["类别5", 3] };

function add(row, tag, text, cls, rows, cols) {
    const cell = document.createElement(tag);
    cell.textContent = text || "";
    if (cls) cell.className = cls;
    if (rows) cell.rowSpan = rows;
    if (cols) cell.colSpan = cols;
    row.appendChild(cell);
}

letters.forEach(letter => {
    document.getElementById("cols").appendChild(document.createElement("col"));
    add(document.getElementById("letters"), "th", letter, letter === "H" || letter === "I" ? "picked" : "");
});

const body = document.getElementById("cells");
for (let r = 1; r <= 22; r++) {
    const row = document.createElement("tr");
    const data = r >= 2 && r <= 18;
    add(row, "th", String(r), data ? "picked" : "");
    if (r === 1) {
        letters.forEach((l, i) => add(row, "td", titles[i], titles[i] ? "title" : ""));
    } else if (data) {
        if (majors[r]) add(row, "td", majors[r][0], "major", majors[r][1]);
        if (minors[r]) add(row, "td", minors[r][0], "minor", minors[r][1]);
        add(row, "td", "小类" + (r - 1), "name");
        numbers[r - 2].forEach(n => add(row, "td", n, "num"));
        add(row, "td");
        const first = r === 2 ? " first" : "";
        add(row, "td", majors[r] && majors[r][0], "sel-h" + first);
        add(row, "td", minors[r] && minors[r][0], "sel-i" + first);
        for (let i = 9; i < 16; i++) add(row, "td");
    } else if (r === 21) {
        add(row, "td", "1.选中K2:K18；2.取消合并；2.定位空值；3.填充（=上一个单元格）（CTRL+ENTER）", "note", 1, 9);
        for (let i = 9; i < 16; i++) add(row, "td");
    } else {
        letters.forEach((l, i) => add(row, "td", r === 20 && i === 0 ? "步骤：" : "", r === 20 && i === 0 ? "note" : ""));
    }
    body.appendChild(row);
}

// 37 x 37 modules
const size = 37;
let seed = 20190614;
function random() {
    seed = (seed * 1103515245 + 12345) % 2147483648;
    return seed / 2147483648;
}
function ring(x, y, cx, cy) {
    return Math.max(Math.abs(x - cx), Math.abs(y - cy));
}
function moduleAt(x, y) {
    const noise = random() < 0.5;
    for (const [cx, cy] of [[3, 3], [33, 3], [3, 33]]) {
        const d = ring(x, y, cx, cy);
        if (d <= 4) return d === 3 || d <= 1;
    }
    const d = ring(x, y, 30, 30);
    if (d <= 2) return d !== 1;
    if (x === 6 || y === 6) return (x + y) % 2 === 0;
    return noise;
}
let path = "";
for (let y = 0; y < size; y++) {
    for (let x = 0; x < size; x++) {
        if (moduleAt(x, y)) path += `M${x} ${y}h1v1h-1z`;
    }
}
["qr", "qr-ghost"].forEach(id => {
    document.getElementById(id).innerHTML = `<path d="${path}" fill="#111"/>`;
});
```
